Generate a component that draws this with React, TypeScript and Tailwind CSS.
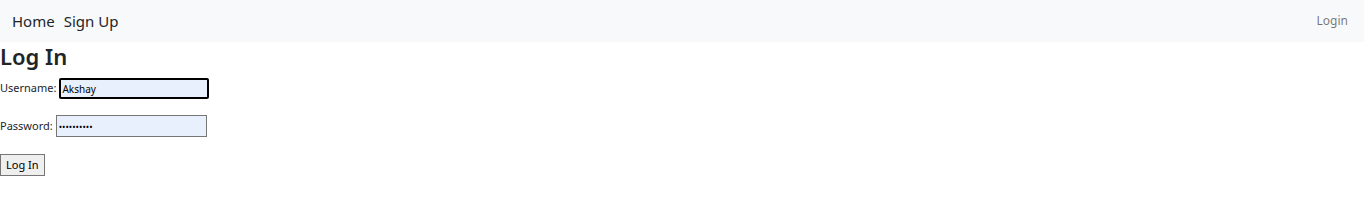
export default function App() {
  return (
    <div className="min-h-[201px] bg-white text-[#212529]" style={{ fontFamily: '"Noto Sans", "Open Sans", sans-serif' }}>
      <nav className="flex h-[42px] items-center justify-between bg-[#f8f9fa] px-3">
        <div className="flex items-center gap-[9px] text-[15px] text-[#212529]">
          <a href="#">Home</a>
          <a href="#">Sign Up</a>
        </div>
        <a href="#" className="pr-[4px] text-[12px] text-[rgba(0,0,0,0.55)]">Login</a>
      </nav>
      <h2 className="text-[22px] font-semibold leading-[28px]">Log In</h2>
      <form className="text-[11px]">
        <div className="mt-[8px] flex items-center gap-[3px]">
          <label>Username:</label>
          <input
            defaultValue="Akshay"
            className="h-[21px] w-[150px] rounded-[2px] border-2 border-black bg-[#e8f0fe] px-[1px] text-[10px] text-black outline-none"
          />
        </div>
        <div className="mt-[16px] flex items-center gap-[3px]">
          <label>Password:</label>
          <input
            type="password"
            defaultValue="abcdefghij"
            className="h-[22px] w-[151px] border border-[#767676] bg-[#e8f0fe] px-[2px] text-[9px] text-black outline-none"
          />
        </div>
        <button
          type="button"
          className="mt-[17px] h-[22px] border border-[#767676] bg-[#efefef] px-[5px] text-[11px] text-black"
        >
          Log In
        </button>
      </form>
    </div>
  );
}
